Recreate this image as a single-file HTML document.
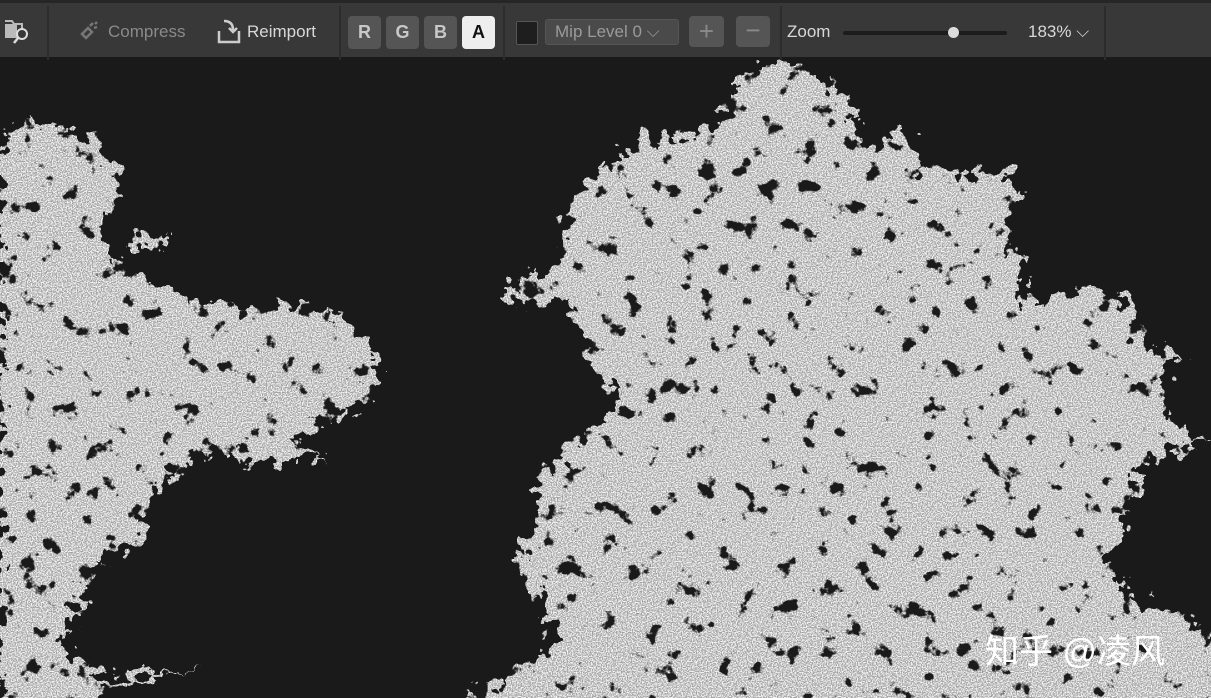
<!DOCTYPE html>
<html><head><meta charset="utf-8"><style>
body{margin:0;width:1211px;height:698px;overflow:hidden;background:#1a1a1a;font-family:"Liberation Sans",sans-serif;position:relative}
#tb{position:absolute;left:0;top:0;width:1211px;height:57px;background:#383838;border-top:3px solid #262626;box-sizing:border-box}
.sep{position:absolute;top:3px;width:2px;height:54px;background:#2c2c2c}
.t{position:absolute;top:19px;font-size:16px;color:#d8d8d8}
.btn{position:absolute;top:13px;width:33px;height:33px;border-radius:4px;background:#555;color:#c8c8c8;font-weight:bold;font-size:18px;text-align:center;line-height:33px}
</style></head><body>
<svg width="1211" height="698" style="position:absolute;left:0;top:0">
<defs>
<filter id="f" x="-10%" y="-10%" width="120%" height="130%">
<feTurbulence type="fractalNoise" baseFrequency="0.08" numOctaves="3" seed="3" result="n"/>
<feDisplacementMap in="SourceGraphic" in2="n" scale="40" xChannelSelector="R" yChannelSelector="G" result="d"/>
<feTurbulence type="fractalNoise" baseFrequency="0.05" numOctaves="4" seed="7" result="h"/>
<feColorMatrix in="h" type="matrix" values="0 0 0 0 0  0 0 0 0 0  0 0 0 0 0  14 0 0 0 -4.0" result="hm"/>
<feComposite in="d" in2="hm" operator="in" result="d2"/>
<feTurbulence type="fractalNoise" baseFrequency="0.8" numOctaves="1" seed="5" result="g"/>
<feColorMatrix in="g" type="matrix" values="0 0 0 0 0.93  0 0 0 0 0.93  0 0 0 0 0.93  4 0 0 0 -1.6" result="gg"/>
<feComposite in="gg" in2="d2" operator="in" result="tex"/>
<feMerge><feMergeNode in="d2"/><feMergeNode in="tex"/></feMerge>
</filter>
</defs>
<g filter="url(#f)" fill="#a2a2a2">
<polygon points="0,150 15,125 50,122 90,140 115,165 120,200 100,230 110,260 190,300 270,310 300,300 350,320 380,365 370,400 330,420 290,440 330,460 250,460 200,450 150,500 140,540 100,560 80,600 60,640 100,680 200,668 100,690 80,730 0,730"/>
<ellipse cx="148" cy="243" rx="20" ry="8"/>
<polygon points="500,295 560,260 570,200 640,140 700,130 720,125 745,70 790,62 850,100 860,140 880,150 900,125 920,170 970,175 1010,170 1020,200 1000,230 1020,260 1020,300 1050,300 1090,285 1135,310 1140,350 1180,355 1160,380 1170,420 1205,440 1150,460 1130,500 1120,530 1110,560 1130,600 1180,615 1211,630 1230,730 420,730 520,670 560,640 540,600 515,560 540,520 540,480 570,440 600,430 620,400 590,360 580,330 570,300 530,305"/>
</g>
</svg>
<div id="tb">
<svg style="position:absolute;left:4px;top:14px" width="28" height="28" viewBox="0 0 28 28"><path d="M1 4h7l2 3h8v6" fill="none" stroke="#bbb" stroke-width="2"/><rect x="1" y="7" width="12" height="14" fill="#bbb"/><circle cx="18" cy="17" r="5" fill="none" stroke="#ddd" stroke-width="2"/><path d="M14 21l-4 5" stroke="#ddd" stroke-width="2.5"/></svg>
<div class="sep" style="left:47px"></div>
<svg style="position:absolute;left:78px;top:17px" width="24" height="24" viewBox="0 0 24 24"><path d="M4 14l6-6 4 4-6 6z M12 6l3-3 M16 8l3-1 M17 4l2-2" fill="none" stroke="#777" stroke-width="2.5"/></svg>
<div class="t" style="left:108px;color:#8a8a8a;font-size:17px">Compress</div>
<svg style="position:absolute;left:216px;top:14px" width="28" height="28" viewBox="0 0 28 28"><path d="M3 14v11h20V14 M8 4c6 0 9 3 9 9 M13 11l4 4 4-4" fill="none" stroke="#ccc" stroke-width="2.5"/></svg>
<div class="t" style="left:247px;font-size:17px">Reimport</div>
<div class="sep" style="left:339px"></div>
<div class="btn" style="left:348px">R</div>
<div class="btn" style="left:386px">G</div>
<div class="btn" style="left:424px">B</div>
<div class="btn" style="left:462px;background:#eee;color:#111">A</div>
<div class="sep" style="left:503px"></div>
<div style="position:absolute;left:516px;top:18px;width:20px;height:22px;background:#1e1e1e;border:1px solid #555;border-radius:2px"></div>
<div style="position:absolute;left:545px;top:16px;width:134px;height:26px;background:#4a4a4a;border-radius:3px;border:1px solid #555;box-sizing:border-box"></div>
<div class="t" style="left:555px;color:#9a9a9a;font-size:17px">Mip Level 0 ⌵</div>
<div class="btn" style="left:689px;top:13px;width:35px;height:31px;line-height:31px;font-size:26px;font-weight:normal;color:#8a8a8a">+</div>
<div class="btn" style="left:736px;top:13px;width:34px;height:31px;line-height:29px;font-size:26px;font-weight:normal;color:#8a8a8a">−</div>
<div class="sep" style="left:780px"></div>
<div class="t" style="left:787px;font-size:17px">Zoom</div>
<div style="position:absolute;left:843px;top:28px;width:164px;height:4px;background:#1c1c1c;border-radius:2px"></div>
<div style="position:absolute;left:948px;top:24px;width:11px;height:11px;background:#ddd;border-radius:50%"></div>
<div class="t" style="left:1028px;font-size:17px">183% ⌵</div>
<div class="sep" style="left:1104px"></div>
</div>
<div style="position:absolute;left:985px;top:624px;font-size:34px;color:#fff;font-family:'Liberation Sans','Noto Sans CJK SC',sans-serif">知乎 @凌风</div>
</body></html>
